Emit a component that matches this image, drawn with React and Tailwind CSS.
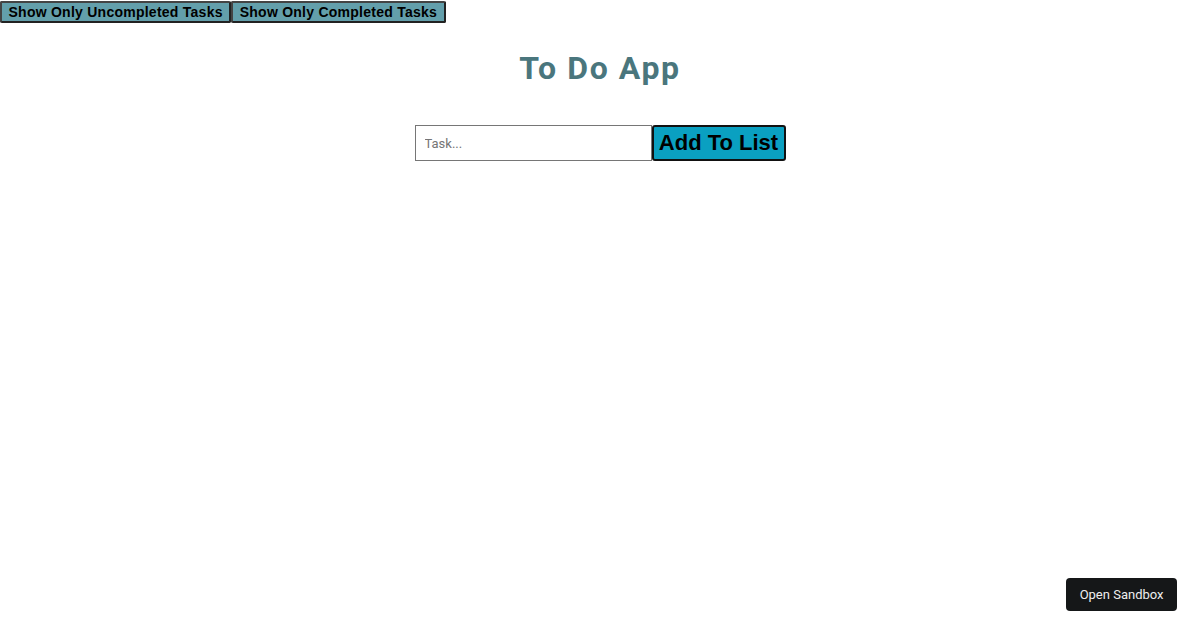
export default function App() {
  return (
    <div className="min-h-[630px] bg-white relative font-['Liberation_Sans',Arial,sans-serif]">
      <div className="flex items-start pt-px">
        <button className="h-[22px] px-[6.5px] bg-[#639fab] text-black text-[14px] tracking-[0.25px] font-bold border-2 border-b-[#222] border-r-[#222] border-t-[#444] border-l-[#444] rounded-[2px] leading-none">
          Show Only Uncompleted Tasks
        </button>
        <button className="h-[22px] px-[6.5px] bg-[#639fab] text-black text-[14px] tracking-[0.25px] font-bold border-2 border-b-[#222] border-r-[#222] border-t-[#444] border-l-[#444] rounded-[2px] leading-none">
          Show Only Completed Tasks
        </button>
      </div>
      <h1 className="mt-[26px] text-center text-[32px] tracking-[1.6px] font-bold text-[#4a767d] font-['Roboto',sans-serif] leading-[38px]">
        To Do App
      </h1>
      <div className="mt-[38px] flex justify-center">
        <input
          placeholder="Task..."
          className="w-[237px] h-[36px] border border-[#767676] px-[9px] text-[13px] font-['Roboto',sans-serif] placeholder:text-[#757575] outline-none"
        />
        <button className="h-[36px] w-[134px] bg-[#0aa0c1] border-2 border-[#111] rounded-[3px] text-[22px] font-bold text-black leading-none">
          Add To List
        </button>
      </div>
      <button className="absolute right-[23px] top-[578px] h-[33px] px-[13.5px] bg-[#151718] text-[#eeeeee] text-[13px] rounded-[4px] font-['Roboto',sans-serif]">
        Open Sandbox
      </button>
    </div>
  );
}
